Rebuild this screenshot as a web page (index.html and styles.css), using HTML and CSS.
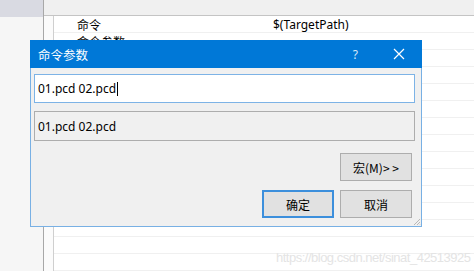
FILE: index.html
```html
<!DOCTYPE html>
<html>
<head>
<meta charset="utf-8">
<link rel="stylesheet" href="styles.css">
</head>
<body>
<div class="screen">
  <div class="left"><div class="left-top"></div></div>
  <div class="right">
    <div class="right-top"></div>
    <div class="right-body">
      <div class="gutter"></div>
      <div class="grid">
        <div class="row"><span class="name">命令</span><span class="val">$(TargetPath)</span></div>
        <div class="row"><span class="name">命令参数</span><span class="val"></span></div>
        <div class="row"></div>
        <div class="row"></div>
        <div class="row"></div>
        <div class="row"></div>
        <div class="row"></div>
        <div class="row"></div>
        <div class="row"></div>
        <div class="row"></div>
        <div class="row"></div>
        <div class="row"></div>
        <div class="row"></div>
        <div class="row"></div>
        <div class="row"></div>
      </div>
    </div>
  </div>
  <div class="watermark">https://blog.csdn.net/sinat_42513925</div>
  <div class="dialog">
    <div class="titlebar">
      <span class="title">命令参数</span>
      <span class="help">?</span>
      <svg class="close" width="12" height="12" viewBox="0 0 12 12"><path d="M1 1L11 11M11 1L1 11" stroke="#fff" stroke-width="1.2" fill="none"/></svg>
    </div>
    <div class="dbody">
      <div class="input edit"><span>01.pcd 02.pcd</span><span class="caret"></span></div>
      <div class="input ro">01.pcd 02.pcd</div>
      <div class="btnrow"><div class="btn">宏(M)&gt; &gt;</div></div>
      <div class="btnrow second"><div class="btn default">确定</div><div class="btn">取消</div></div>
    </div>
    <svg class="grip" width="8" height="8" viewBox="0 0 8 8"><path d="M7 1L1 7M7 4L4 7M7 6.5L6.5 7" stroke="#b8b8b8" stroke-width="1" fill="none"/></svg>
  </div>
</div>
</body>
</html>
```
FILE: styles.css
```css
* { box-sizing: border-box; }
html, body { margin: 0; padding: 0; }
body { width: 474px; height: 271px; overflow: hidden; font-family: "Noto Sans", "Noto Sans CJK SC", sans-serif; font-size: 12px; color: #000; }
.screen { position: relative; width: 474px; height: 271px; display: flex; background: #fff; }
.left { width: 44px; background: #f6f6f6; border-right: 1px solid #a8a8a8; flex: none; }
.left-top { height: 17px; background: #d9dae2; }
.right { flex: 1; display: flex; flex-direction: column; }
.right-top { height: 16px; background: #f0f0f0; border-bottom: 1px solid #c4c4c4; flex: none; }
.right-body { flex: 1; display: flex; }
.gutter { width: 10px; background: #fbfbfb; border-right: 1px solid #cfcfcf; flex: none; }
.grid { flex: 1; background: #fff; }
.row { height: 17px; border-bottom: 1px solid #f0f0f0; display: flex; align-items: center; font-family: "Noto Sans CJK SC", sans-serif; font-size: 12px; }
.row .name { width: 219px; padding-left: 23px; flex: none; }
.row .val { font-family: "Noto Sans", "Noto Sans CJK SC", sans-serif; }
.watermark { position: absolute; left: 276px; top: 250px; font-family: "Liberation Sans", sans-serif; font-size: 13px; letter-spacing: -0.5px; color: #e4e4e4; white-space: nowrap; }
.dialog { position: absolute; left: 30px; top: 40px; width: 392px; height: 187px; background: #f0f0f0; border: 1px solid #78b0e4; display: flex; flex-direction: column; }
.titlebar { height: 28px; margin: -1px -1px 0 -1px; background: #0078d7; color: #fff; display: flex; align-items: center; padding-left: 8px; flex: none; }
.title { font-family: "Noto Sans CJK SC", sans-serif; font-size: 12.5px; flex: 1; }
.help { font-family: "Noto Sans", sans-serif; font-size: 12px; margin-right: 35px; color: #d8e8f8; }
.close { margin-right: 17px; }
.dbody { padding: 6px 6px 0 3px; display: flex; flex-direction: column; }
.input { height: 29px; border: 1px solid #adadad; display: flex; align-items: center; padding-left: 3px; font-size: 12px; }
.input.edit { background: #fff; border-color: #7db3e6; }
.caret { width: 1px; height: 14px; background: #000; margin-left: 1px; }
.input.ro { margin-top: 8px; height: 30px; background: #f0f0f0; }
.btnrow { display: flex; justify-content: flex-end; gap: 6px; margin-top: 12px; padding-right: 3px; }
.btnrow.second { margin-top: 9px; }
.btn { width: 72px; height: 28px; background: #e1e1e1; border: 1px solid #adadad; display: flex; align-items: center; justify-content: center; font-family: "Noto Sans CJK SC", sans-serif; font-size: 12px; }
.btn.default { border: 2px solid #3c8fdc; height: 28px; }
.grip { position: absolute; right: 0; bottom: 0; }
```
